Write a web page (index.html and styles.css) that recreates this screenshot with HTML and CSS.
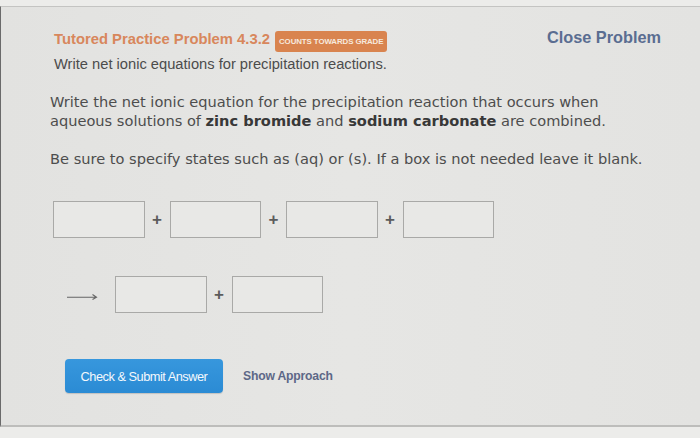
FILE: index.html
```html
<!DOCTYPE html>
<html>
<head>
<meta charset="utf-8">
<link rel="stylesheet" href="styles.css">
</head>
<body>
<div class="frame">
  <div class="header">
    <div class="head-left">
      <div class="title-row">
        <span class="title">Tutored Practice Problem 4.3.2</span>
        <span class="badge">COUNTS TOWARDS GRADE</span>
      </div>
      <div class="subtitle">Write net ionic equations for precipitation reactions.</div>
    </div>
    <a class="close">Close Problem</a>
  </div>
  <div class="content">
    <p class="para first">Write the net ionic equation for the precipitation reaction that occurs when aqueous solutions of <b>zinc bromide</b> and <b>sodium carbonate</b> are combined.</p>
    <p class="para">Be sure to specify states such as (aq) or (s). If a box is not needed leave it blank.</p>
    <div class="eq-row row1">
      <span class="box"></span><span class="plus">+</span>
      <span class="box"></span><span class="plus">+</span>
      <span class="box"></span><span class="plus">+</span>
      <span class="box"></span>
    </div>
    <div class="eq-row row2">
      <svg class="arrow" width="32" height="8" viewBox="0 0 32 8"><path d="M1 4.2 H30 M26.5 1.5 L30.5 4.2 L26.5 6.5" fill="none" stroke="#666" stroke-width="1.1"/></svg>
      <span class="box"></span><span class="plus">+</span>
      <span class="box"></span>
    </div>
    <div class="actions">
      <button class="submit">Check &amp; Submit Answer</button>
      <a class="approach">Show Approach</a>
    </div>
  </div>
</div>
</body>
</html>
```
FILE: styles.css
```css
html, body {
  margin: 0;
  padding: 0;
}
body {
  background: #ececea;
  width: 700px;
  height: 438px;
  overflow: hidden;
  padding-top: 6px;
  box-sizing: border-box;
}
.frame {
  height: 421px;
  box-sizing: border-box;
  background: linear-gradient(90deg, #e2e2e0 0%, #e6e6e4 50%, #e3e3e1 100%);
  border-top: 1px solid #c4c4c2;
  border-bottom: 2px solid #bdbdbb;
  border-left: 1px solid #6a6a6a;
  padding: 20px 39px 0 53px;
}
.header {
  display: flex;
  justify-content: space-between;
  align-items: flex-start;
}
.title-row {
  display: flex;
  align-items: center;
  gap: 5px;
  height: 24px;
}
.title {
  font-family: "Liberation Sans", Arial, sans-serif;
  font-weight: bold;
  font-size: 14.8px;
  color: #d8875c;
}
.badge {
  font-family: "Liberation Sans", Arial, sans-serif;
  font-weight: bold;
  font-size: 7.9px;
  color: #f6e9de;
  background: #d9844f;
  border-radius: 3px;
  padding: 6px 4px 6px;
  margin-top: 4px;
  letter-spacing: -0.1px;
}
.subtitle {
  font-family: "Liberation Sans", Arial, sans-serif;
  font-size: 14.7px;
  color: #4c4c4c;
  margin-top: 5px;
}
.close {
  font-family: "Liberation Sans", Arial, sans-serif;
  font-weight: bold;
  font-size: 16.3px;
  color: #5a6d91;
  margin-top: 1px;
}
.content {
  margin-left: -4px;
}
.para {
  font-family: "DejaVu Sans", Verdana, sans-serif;
  font-size: 14.6px;
  line-height: 19px;
  color: #4d4d4d;
  margin: 20px 0 0;
}
.para.first {
  max-width: 570px;
}
.para b {
  color: #383838;
}
.para + .para {
  margin-top: 19px;
}
.eq-row {
  display: flex;
  align-items: center;
}
.row1 {
  margin-top: 33px;
  margin-left: 3px;
}
.row2 {
  margin-top: 38px;
  margin-left: 16px;
}
.box {
  display: block;
  width: 89.5px;
  height: 35px;
  border: 1.5px solid #a9a9a7;
  background: #e8e8e6;
}
.plus {
  font-family: "Liberation Sans", Arial, sans-serif;
  font-weight: bold;
  font-size: 17px;
  color: #5c5c5c;
  width: 25px;
  text-align: center;
}
.arrow {
  margin-right: 17px;
  margin-top: 4px;
}
.actions {
  display: flex;
  align-items: center;
  margin-top: 46px;
  margin-left: 15px;
}
.submit {
  width: 158px;
  height: 34px;
  border: none;
  border-radius: 4px;
  background: linear-gradient(180deg, #3797dd, #2b8bd4);
  color: #f4f8fc;
  font-family: "Liberation Sans", Arial, sans-serif;
  font-size: 12.8px;
  letter-spacing: -0.5px;
  padding: 0;
  box-shadow: 0 1px 1px rgba(0,0,0,0.15);
}
.approach {
  margin-left: 20px;
  font-family: "Liberation Sans", Arial, sans-serif;
  font-weight: bold;
  font-size: 12.2px;
  color: #5d6887;
  letter-spacing: -0.2px;
}
```
